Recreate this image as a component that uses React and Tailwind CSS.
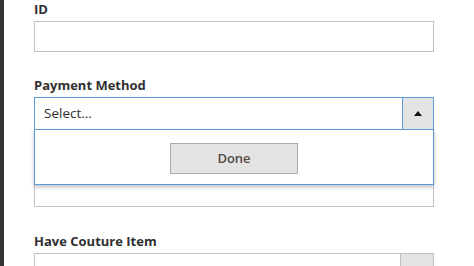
import React from 'react';

function Label({ children }) {
  return (
    <div className="h-[19px] mb-[2px] text-[13px] leading-[19px] font-bold text-[#303030]">{children}</div>
  );
}

function Arrow({ up }) {
  return (
    <svg width="8" height="5" viewBox="0 0 8 5" className="block">
      {up ? <path d="M0 5 L4 0 L8 5 Z" fill="#111" /> : <path d="M0 0 L4 5 L8 0 Z" fill="#111" />}
    </svg>
  );
}

export default function App() {
  return (
    <div className="flex h-[266px] w-[474px] overflow-hidden bg-white" style={{ fontFamily: '"Open Sans", "Noto Sans", sans-serif' }}>
      <div className="w-[4px] shrink-0 bg-[#36322f]"></div>
      <div className="w-[400px] ml-[30px] pt-0">
        {/* ID */}
        <div className="mb-[24px]">
          <Label>ID</Label>
          <div className="h-[31px] border border-[#c2c2c2] bg-white"></div>
        </div>

        {/* Payment Method (open) */}
        <div className="mb-[25px] relative">
          <Label>Payment Method</Label>
          <div className="relative z-20 h-[33px] flex border border-[#5b9bd8] bg-white">
            <div className="flex-1 flex items-center pl-[9px] text-[13.5px] text-[#303030]">Select...</div>
            <div className="w-[31px] flex items-center justify-center bg-[#e3e3e3] border-l border-[#5b9bd8]">
              <Arrow up />
            </div>
          </div>
          <div className="absolute left-0 right-0 top-[53px] z-10 h-[56px] border border-[#5b9bd8] bg-white shadow-[0_2px_4px_rgba(0,0,0,0.25)] flex justify-center pt-[13px]">
            <button className="w-[128px] h-[31px] bg-[#e3e3e3] border border-[#adadad] text-[13px] font-semibold text-[#514943]">Done</button>
          </div>
        </div>

        {/* hidden field under dropdown */}
        <div className="mb-[25px]">
          <Label>Method Detail</Label>
          <div className="h-[31px] border border-[#c2c2c2] bg-white"></div>
        </div>

        {/* Have Couture Item */}
        <div>
          <Label>Have Couture Item</Label>
          <div className="h-[32px] flex border border-[#c2c2c2] bg-white">
            <div className="flex-1"></div>
            <div className="w-[33px] flex items-center justify-center bg-[#e3e3e3] border-l border-[#c2c2c2]">
              <Arrow />
            </div>
          </div>
        </div>
      </div>
    </div>
  );
}
